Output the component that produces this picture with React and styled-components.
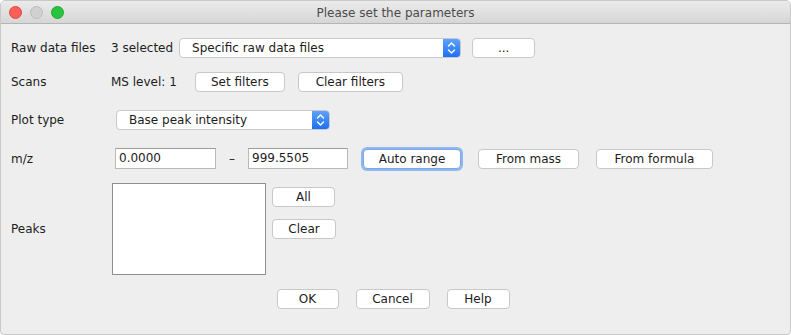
import React from 'react'
import styled, { createGlobalStyle } from 'styled-components'

const Global = createGlobalStyle`
    html, body {
        margin: 0;
        padding: 0;
        background: #ffffff;
    }
    body {
        font-family: "DejaVu Sans", "Liberation Sans", sans-serif;
        font-size: 12px;
        color: #1d1d1d;
    }
`;

const Window = styled.div`
    width: 791px;
    height: 335px;
    box-sizing: border-box;
    background-color: #eeeeee;
    border: 1px solid #c9c9c9;
    border-radius: 5px 5px 4px 4px;
    overflow: hidden;
    display: flex;
    flex-direction: column;
`;

const TitleBar = styled.div`
    height: 22px;
    flex-shrink: 0;
    position: relative;
    display: flex;
    align-items: center;
    justify-content: center;
    background: linear-gradient(#ebebeb, #d6d6d6);
    border-bottom: 1px solid #b4b4b4;
`;

const Lights = styled.div`
    position: absolute;
    left: 8px;
    top: 5px;
    display: flex;
    gap: 8px;
`;

const Light = styled.span`
    width: 11px;
    height: 11px;
    border-radius: 50%;
    background-color: ${({ $c }) => $c};
    border: 0.5px solid ${({ $b }) => $b};
`;

const Title = styled.div`
    color: #4b4b4b;
    font-size: 12px;
    padding-top: 1px;
`;

const Form = styled.div`
    display: flex;
    flex-direction: column;
    padding-left: 10px;
`;

const Row = styled.div`
    display: flex;
    align-items: center;
    margin-top: ${({ $mt }) => $mt}px;
    height: ${({ $h }) => $h || 20}px;
`;

const Label = styled.div`
    width: 100px;
    flex-shrink: 0;
`;

const Text = styled.span`
    margin-right: ${({ $mr }) => $mr || 0}px;
    white-space: nowrap;
`;

const Button = styled.button`
    width: ${({ $w }) => $w}px;
    height: 20px;
    box-sizing: border-box;
    margin-left: ${({ $ml }) => $ml || 0}px;
    background: #ffffff;
    border: 1px solid #c8c8c8;
    border-bottom-color: #b5b5b5;
    border-radius: 4px;
    font-family: "DejaVu Sans", "Liberation Sans", sans-serif;
    font-size: 12px;
    color: #1d1d1d;
    padding: 0;
    box-shadow: ${({ $focus }) => $focus ? '0 0 0 2px #8fb8f2' : 'none'};
    border-color: ${({ $focus }) => $focus ? '#7aa7e8' : '#c8c8c8'};
`;

const Combo = styled.div`
    width: ${({ $w }) => $w}px;
    height: 20px;
    box-sizing: border-box;
    margin-left: ${({ $ml }) => $ml || 0}px;
    display: flex;
    align-items: center;
    background: #ffffff;
    border: 1px solid #c8c8c8;
    border-radius: 4px;
    overflow: hidden;
`;

const ComboText = styled.div`
    flex: 1;
    padding-left: 12px;
    white-space: nowrap;
`;

const ComboArrow = styled.div`
    width: 17px;
    height: 100%;
    display: flex;
    align-items: center;
    justify-content: center;
    background: linear-gradient(#5ea2fb, #1f6ff4);
`;

const Field = styled.div`
    width: ${({ $w }) => $w}px;
    height: 21px;
    box-sizing: border-box;
    margin-left: ${({ $ml }) => $ml || 0}px;
    background: #ffffff;
    border: 1px solid #b9b9b9;
    border-top-color: #9c9c9c;
    padding: 2px 0 0 3px;
`;

const Dash = styled.span`
    width: 32px;
    text-align: center;
`;

const PeaksArea = styled.div`
    display: flex;
    align-items: center;
    height: 91px;
    margin-top: 14px;
`;

const List = styled.div`
    width: 154px;
    height: 92px;
    box-sizing: border-box;
    margin-left: 1px;
    background: #ffffff;
    border: 1px solid #8f8f8f;
`;

const SideButtons = styled.div`
    align-self: flex-start;
    display: flex;
    flex-direction: column;
    gap: 12px;
    margin-top: 4px;
    margin-left: 6px;
`;

const Footer = styled.div`
    display: flex;
    justify-content: center;
    gap: 17px;
    margin-top: 15px;
    padding-right: 5px;
`;

const Arrows = () => (
    <svg width="9" height="14" viewBox="0 0 9 14">
        <path d="M1.5 5 L4.5 2 L7.5 5 M1.5 9 L4.5 12 L7.5 9" fill="none" stroke="#ffffff" strokeWidth="1.4" strokeLinecap="round" strokeLinejoin="round" />
    </svg>
)

const App = () => {
    return (
        <Window>
            <Global />
            <TitleBar>
                <Lights>
                    <Light $c="#fd5e57" $b="#e0463f" />
                    <Light $c="#d1d1d1" $b="#bcbcbc" />
                    <Light $c="#29c43f" $b="#1ea932" />
                </Lights>
                <Title>Please set the parameters</Title>
            </TitleBar>
            <Form>
                <Row $mt={14}>
                    <Label>Raw data files</Label>
                    <Text $mr={6}>3 selected</Text>
                    <Combo $w={282}>
                        <ComboText>Specific raw data files</ComboText>
                        <ComboArrow><Arrows /></ComboArrow>
                    </Combo>
                    <Button $w={63} $ml={11}>...</Button>
                </Row>
                <Row $mt={14}>
                    <Label>Scans</Label>
                    <Text $mr={18}>MS level: 1</Text>
                    <Button $w={90}>Set filters</Button>
                    <Button $w={105} $ml={13}>Clear filters</Button>
                </Row>
                <Row $mt={18}>
                    <Label>Plot type</Label>
                    <Combo $w={214} $ml={5}>
                        <ComboText>Base peak intensity</ComboText>
                        <ComboArrow><Arrows /></ComboArrow>
                    </Combo>
                </Row>
                <Row $mt={18} $h={21}>
                    <Label>m/z</Label>
                    <Field $w={101} $ml={4}>0.0000</Field>
                    <Dash>–</Dash>
                    <Field $w={100}>999.5505</Field>
                    <Button $w={98} $ml={15} $focus>Auto range</Button>
                    <Button $w={101} $ml={17}>From mass</Button>
                    <Button $w={117} $ml={17}>From formula</Button>
                </Row>
                <PeaksArea>
                    <Label>Peaks</Label>
                    <List />
                    <SideButtons>
                        <Button $w={63}>All</Button>
                        <Button $w={64}>Clear</Button>
                    </SideButtons>
                </PeaksArea>
            </Form>
            <Footer>
                <Button $w={62}>OK</Button>
                <Button $w={74}>Cancel</Button>
                <Button $w={63}>Help</Button>
            </Footer>
        </Window>
    )
}

export default App
